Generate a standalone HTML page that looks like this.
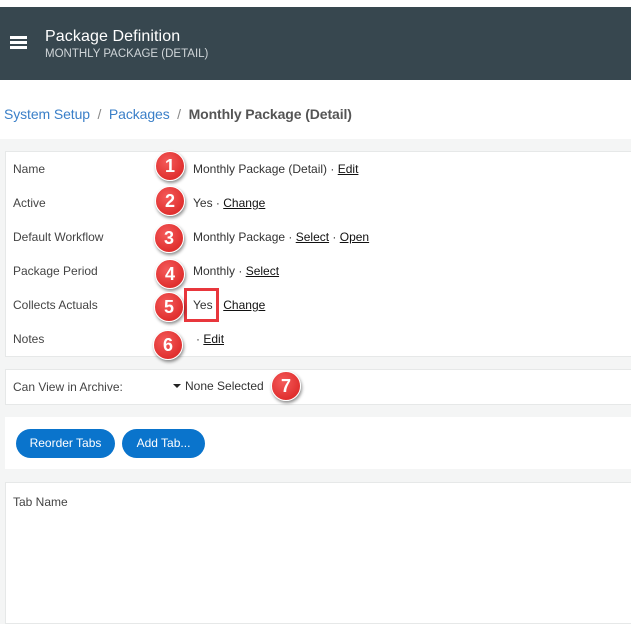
<!DOCTYPE html>
<html><head><style>
body{margin:0;width:631px;height:615px;overflow:hidden;background:#f4f5f5;font-family:"Liberation Sans",sans-serif;position:relative}
div,span{position:absolute}
.hdr{left:0;top:7px;width:631px;height:73px;background:#37474f}
.card{background:#fff;border:1px solid #e6e8e8;left:5px;width:640px}
.lbl{left:13px;font-size:12px;color:#444}
.val{left:193px;font-size:12px;color:#333;white-space:nowrap}
.val u{color:#111}
.c{width:28px;height:28px;border-radius:50%;background:radial-gradient(circle at 40% 35%,#f45a5a,#e0302f 70%);color:#fff;font-weight:bold;font-size:18px;text-align:center;line-height:28px;box-shadow:1px 2px 3px rgba(0,0,0,.45);border:1px solid #fff}
.btn{background:#0a74cc;color:#fff;font-size:12px;border-radius:15px;height:29px;line-height:29px;text-align:center;top:429px}
</style></head><body>
<div style="left:0;top:0;width:631px;height:7px;background:#fff"></div>
<div class="hdr"></div>
<div style="left:10px;top:36px;width:17px;height:3px;background:#fff;box-shadow:0 5px 0 #fff,0 10px 0 #fff"></div>
<div style="left:45px;top:28px;color:#fff;font-size:16px;letter-spacing:0.1px">Package Definition</div>
<div style="left:45px;top:48px;color:#d0d6d9;font-size:11.5px">MONTHLY PACKAGE (DETAIL)</div>
<div style="left:0;top:80px;width:631px;height:59px;background:#fff"></div>
<div style="left:4px;top:106px;font-size:14px;color:#3a7fc8;white-space:nowrap;letter-spacing:-0.1px">System Setup <span style="position:static;color:#888">&nbsp;/&nbsp;</span> Packages <span style="position:static;color:#888">&nbsp;/&nbsp;</span> <b style="color:#555">Monthly Package (Detail)</b></div>
<div class="card" style="top:151px;height:204px"></div>
<div class="lbl" style="top:162px">Name</div>
<div class="lbl" style="top:196px">Active</div>
<div class="lbl" style="top:230px">Default Workflow</div>
<div class="lbl" style="top:264px">Package Period</div>
<div class="lbl" style="top:298px">Collects Actuals</div>
<div class="lbl" style="top:332px">Notes</div>
<div class="val" style="top:162px">Monthly Package (Detail) · <u>Edit</u></div>
<div class="val" style="top:196px">Yes · <u>Change</u></div>
<div class="val" style="top:230px">Monthly Package · <u>Select</u> · <u>Open</u></div>
<div class="val" style="top:264px">Monthly · <u>Select</u></div>
<div class="val" style="top:298px">Yes · <u>Change</u></div>
<div class="val" style="left:196px;top:332px">· <u>Edit</u></div>
<div style="left:184px;top:288px;width:29px;height:28px;border:3px solid #e8363c"></div>
<div class="c" style="left:155px;top:151px">1</div>
<div class="c" style="left:155px;top:186px">2</div>
<div class="c" style="left:154px;top:223px">3</div>
<div class="c" style="left:155px;top:259px">4</div>
<div class="c" style="left:154px;top:292px">5</div>
<div class="c" style="left:153px;top:330px">6</div>
<div class="card" style="top:369px;height:34px"></div>
<div class="lbl" style="top:380px">Can View in Archive:</div>
<div style="left:173px;top:384px;width:0;height:0;border:4px solid transparent;border-top:4px solid #222"></div>
<div class="val" style="left:185px;top:379px">None Selected</div>
<div class="c" style="left:271px;top:371px">7</div>
<div class="card" style="top:417px;height:52px;border:none"></div>
<div class="btn" style="left:16px;width:99px">Reorder Tabs</div>
<div class="btn" style="left:122px;width:83px">Add Tab...</div>
<div class="card" style="top:482px;height:140px"></div>
<div class="lbl" style="top:495px">Tab Name</div>
</body></html>
